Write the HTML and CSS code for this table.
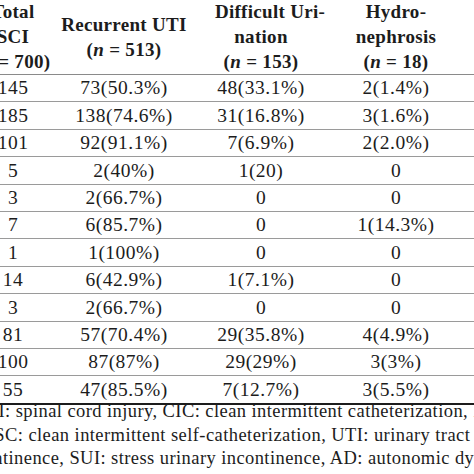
FILE: index.html
```html
<!DOCTYPE html>
<html>
<head>
<meta charset="utf-8">
<link rel="stylesheet" href="styles.css">
</head>
<body>
<div class="wrap">
<table class="tbl">
<colgroup>
<col class="c1"><col class="c2"><col class="c3"><col class="c4"><col class="c5">
</colgroup>
<thead>
<tr>
<th>Total<br>SCI<br>(<i>n</i> = 700)</th>
<th>Recurrent UTI<br>(<i>n</i> = 513)</th>
<th><span class="shift">Difficult Uri-</span>nation<br>(<i>n</i> = 153)</th>
<th>Hydro-<br>nephrosis<br>(<i>n</i> = 18)</th>
<th></th>
</tr>
</thead>
<tbody>
<tr><td>145</td><td>73(50.3%)</td><td>48(33.1%)</td><td>2(1.4%)</td><td></td></tr>
<tr><td>185</td><td>138(74.6%)</td><td>31(16.8%)</td><td>3(1.6%)</td><td></td></tr>
<tr><td>101</td><td>92(91.1%)</td><td>7(6.9%)</td><td>2(2.0%)</td><td></td></tr>
<tr><td>5</td><td>2(40%)</td><td>1(20)</td><td>0</td><td></td></tr>
<tr><td>3</td><td>2(66.7%)</td><td>0</td><td>0</td><td></td></tr>
<tr><td>7</td><td>6(85.7%)</td><td>0</td><td>1(14.3%)</td><td></td></tr>
<tr><td>1</td><td>1(100%)</td><td>0</td><td>0</td><td></td></tr>
<tr><td>14</td><td>6(42.9%)</td><td>1(7.1%)</td><td>0</td><td></td></tr>
<tr><td>3</td><td>2(66.7%)</td><td>0</td><td>0</td><td></td></tr>
<tr><td>81</td><td>57(70.4%)</td><td>29(35.8%)</td><td>4(4.9%)</td><td></td></tr>
<tr><td>100</td><td>87(87%)</td><td>29(29%)</td><td>3(3%)</td><td></td></tr>
<tr><td>55</td><td>47(85.5%)</td><td>7(12.7%)</td><td>3(5.5%)</td><td></td></tr>
</tbody>
</table>
<p class="note">SCI: spinal cord injury, CIC: clean intermittent catheterization, IDC: indwelling<br>CISC: clean intermittent self-catheterization, UTI: urinary tract infection, UI: urinary in-<br>continence, SUI: stress urinary incontinence, AD: autonomic dysreflexia.</p>
</div>
</body>
</html>
```
FILE: styles.css
```css
html, body {
  margin: 0;
  padding: 0;
  background: #ffffff;
  overflow: hidden;
}
body {
  width: 474px;
  height: 474px;
  font-family: "Liberation Serif", "Times New Roman", serif;
  color: #1c1c1c;
}
.wrap {
  margin-left: -30px;
  margin-top: -1px;
  width: 622px;
}
.tbl {
  border-collapse: collapse;
  table-layout: fixed;
  width: 622px;
  font-size: 19.5px;
}
.c1 { width: 86px; }
.c2 { width: 136px; }
.c3 { width: 138px; }
.c4 { width: 132px; }
.c5 { width: 130px; }
.tbl th {
  font-weight: bold;
  font-size: 19px;
  letter-spacing: 0.3px;
  line-height: 25px;
  padding: 0;
  vertical-align: middle;
  text-align: center;
  border-bottom: 1px solid #8a8a8a;
}
.tbl th i { font-style: italic; }
.shift {
  display: block;
  padding-left: 18px;
}
.tbl td {
  height: 26px;
  padding: 0;
  line-height: 20px;
  letter-spacing: 0.5px;
  text-align: center;
  vertical-align: middle;
  border-bottom: 1px solid #9a9a9a;
}
.tbl tbody tr:nth-child(2) td,
.tbl tbody tr:nth-child(4) td,
.tbl tbody tr:nth-child(7) td,
.tbl tbody tr:nth-child(9) td,
.tbl tbody tr:nth-child(12) td {
  height: 27px;
}
.tbl tbody tr:last-child td {
  border-bottom: 2px solid #1c1c1c;
}
.note {
  margin: -5px 0 0 0;
  padding-left: 5px;
  font-size: 18.5px;
  letter-spacing: 0.42px;
  line-height: 23.5px;
  white-space: nowrap;
}
```
